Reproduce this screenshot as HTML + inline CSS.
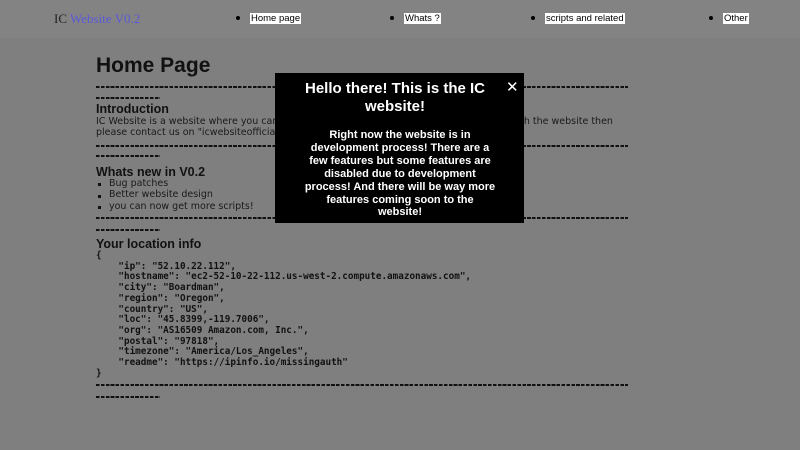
<!DOCTYPE html>
<html><head><style>
*{margin:0;padding:0}
body{width:800px;height:450px;background:#7f7f7f;position:relative;overflow:hidden;font-family:"DejaVu Sans","Liberation Sans",sans-serif;color:#111}
.hdr{position:absolute;left:0;top:0;width:800px;height:38px;background:#838383}
.a{position:absolute;white-space:nowrap}
.logo{left:54px;top:11px;font-family:"Liberation Serif",serif;font-size:13px;color:#222}
.logo span{color:#5a5ad8}
.nav{font-family:"Liberation Sans",sans-serif;font-size:9.5px;background:#fff;color:#000;padding:0 1px;line-height:11px;top:13px}
.dot{width:4px;height:4px;border-radius:50%;background:#000;top:16px}
.d{position:absolute;height:2px;background:repeating-linear-gradient(90deg,#111 0 3.6px,transparent 3.6px 4.9px)}
h1{position:absolute;left:96px;top:54px;font-size:21px;font-weight:bold;font-family:"Liberation Sans",sans-serif}
.h{font-size:12.5px;font-weight:bold;left:96px;font-family:"Liberation Sans",sans-serif}
.t{font-size:9.5px;left:96px;color:#1a1a1a}
.c{font-family:"DejaVu Sans Mono",monospace;font-weight:bold;font-size:9.3px;left:96px;line-height:10.7px;white-space:pre}
.b{width:3px;height:3px;background:#111;left:98px}
.m{position:absolute;left:275px;top:73px;width:249px;height:150px;background:#000;color:#fff;text-align:center;font-weight:bold;font-family:"Liberation Sans",sans-serif}
.m .ti{position:absolute;left:5px;width:230px;top:7px;font-size:15px;line-height:18px}
.m .bd{position:absolute;left:5px;width:240px;top:56px;font-size:11px;line-height:12.9px}
.x{position:absolute;left:231px;top:5px;font-size:15px;font-family:"DejaVu Sans",sans-serif}
</style></head><body>
<div class="hdr"></div>
<div class="a logo">IC <span>Website V0.2</span></div>
<div class="a dot" style="left:236px"></div><div class="a nav" style="left:250px">Home page</div>
<div class="a dot" style="left:390px"></div><div class="a nav" style="left:404px">Whats ?</div>
<div class="a dot" style="left:531px"></div><div class="a nav" style="left:545px">scripts and related</div>
<div class="a dot" style="left:709px"></div><div class="a nav" style="left:723px">Other</div>

<h1>Home Page</h1>
<div class="d" style="left:96px;top:86px;width:532px"></div>
<div class="d" style="left:96px;top:97px;width:64px"></div>
<div class="a h" style="top:102px">Introduction</div>
<div class="a t" style="top:116px">IC Website is a website where you can get scripts and more. If you have any problems with the website then</div>
<div class="a t" style="top:127px">please contact us on "icwebsiteofficial@gmail.com"</div>
<div class="d" style="left:96px;top:145px;width:532px"></div>
<div class="d" style="left:96px;top:155px;width:64px"></div>
<div class="a h" style="top:165px">Whats new in V0.2</div>
<div class="a b" style="top:183px"></div><div class="a t" style="top:178px;left:109px">Bug patches</div>
<div class="a b" style="top:195px"></div><div class="a t" style="top:189px;left:109px">Better website design</div>
<div class="a b" style="top:206px"></div><div class="a t" style="top:201px;left:109px">you can now get more scripts!</div>
<div class="d" style="left:96px;top:217px;width:532px"></div>
<div class="d" style="left:96px;top:229px;width:64px"></div>
<div class="a h" style="top:237px">Your location info</div>
<div class="a c" style="top:251px">{
    "ip": "52.10.22.112",
    "hostname": "ec2-52-10-22-112.us-west-2.compute.amazonaws.com",
    "city": "Boardman",
    "region": "Oregon",
    "country": "US",
    "loc": "45.8399,-119.7006",
    "org": "AS16509 Amazon.com, Inc.",
    "postal": "97818",
    "timezone": "America/Los_Angeles",
    "readme": "https://ipinfo.io/missingauth"
}</div>
<div class="d" style="left:96px;top:384px;width:532px"></div>
<div class="d" style="left:96px;top:396px;width:64px"></div>

<div class="m">
<div class="ti">Hello there! This is the IC website!</div>
<div class="x">✕</div>
<div class="bd">Right now the website is in<br>development process! There are a<br>few features but some features are<br>disabled due to development<br>process! And there will be way more<br>features coming soon to the<br>website!</div>
</div>
</body></html>
